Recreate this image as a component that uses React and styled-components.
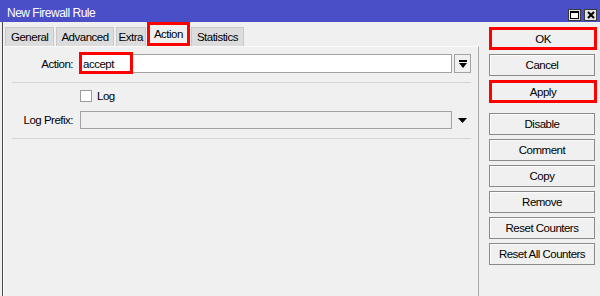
import React from "react";
import styled, { createGlobalStyle } from "styled-components";

const GlobalStyle = createGlobalStyle`
  html, body {
    margin: 0;
    padding: 0;
    background: #f0f0f0;
  }
  body {
    font-family: "Liberation Sans", Arial, sans-serif;
    font-size: 11.5px;
    letter-spacing: -0.5px;
    color: #000;
  }
`;

const Window = styled.div`
  width: 600px;
  height: 296px;
  display: flex;
  flex-direction: column;
  background: #f0f0f0;
  overflow: hidden;
`;

const TitleBar = styled.div`
  height: 22px;
  flex: none;
  box-sizing: border-box;
  background: #4b4fc7;
  color: #fff;
  display: flex;
  align-items: flex-end;
  padding: 0 3px 1px 7px;
`;

const Title = styled.div`
  flex: 1;
  font-size: 12px;
  line-height: 16px;
`;

const TitleButtons = styled.div`
  display: flex;
  gap: 3px;
`;

const TitleButton = styled.div`
  width: 13px;
  height: 12px;
  box-sizing: border-box;
  background: #e4e4e4;
  border: 1px solid #3a3a3a;
  display: flex;
  align-items: center;
  justify-content: center;
`;

const Body = styled.div`
  flex: 1;
  display: flex;
  padding-left: 2px;
`;

const Main = styled.div`
  width: 477px;
  flex: none;
  display: flex;
  flex-direction: column;
  box-sizing: border-box;
  border-left: 1px solid #4a4a4a;
`;

const TabRow = styled.div`
  height: 24px;
  flex: none;
  display: flex;
  align-items: flex-end;
  gap: 2px;
  padding-left: 2px;
`;

const Tab = styled.div`
  height: ${(p) => (p.$active ? 24 : 19)}px;
  box-sizing: border-box;
  padding: 0 ${(p) => p.$pad ?? 5}px;
  display: flex;
  align-items: center;
  background: ${(p) => (p.$active ? "#f0f0f0" : "#dcdcdc")};
  border: ${(p) => (p.$active ? "3px solid #ff0000" : "1px solid #c9c9c9")};
  border-bottom: ${(p) => (p.$active ? "3px solid #ff0000" : "none")};
  margin: 0 ${(p) => (p.$active ? -1 : 0)}px;
`;

const Panel = styled.div`
  flex: 1;
  display: flex;
  flex-direction: column;
  padding: 7px 7px 0 0;
  border-right: 1px solid #a8a8a8;
  border-top: 1px solid #fafafa;
  box-shadow: inset 1px 0 #ffffff;
`;

const FormRow = styled.div`
  display: flex;
  align-items: center;
  height: ${(p) => p.$h}px;
  margin-top: ${(p) => p.$top ?? 0}px;
`;

const Label = styled.div`
  width: 70px;
  margin-right: 7px;
  text-align: right;
`;

const TextBox = styled.div`
  flex: 1;
  height: 100%;
  box-sizing: border-box;
  position: relative;
  display: flex;
  align-items: center;
  padding-left: 2px;
  background: ${(p) => (p.$disabled ? "#f0f0f0" : "#ffffff")};
  border: 1px solid #a3a3a3;
`;

const Mark = styled.div`
  position: absolute;
  left: -2px;
  top: -3px;
  width: 54px;
  height: 22px;
  box-sizing: border-box;
  border: 3px solid #ff0000;
`;

const Trailing = styled.div`
  width: 17px;
  height: 100%;
  margin-left: 2px;
  box-sizing: border-box;
  display: flex;
  align-items: center;
  justify-content: center;
  background: ${(p) => (p.$framed ? "#f0f0f0" : "transparent")};
  border: ${(p) => (p.$framed ? "1px solid #a3a3a3" : "none")};
`;

const Separator = styled.div`
  height: 1px;
  background: #d6d6d6;
  margin: ${(p) => p.$top}px 0 0 9px;
`;

const CheckRow = styled.label`
  display: flex;
  align-items: center;
  height: 13px;
  margin-top: 6px;
  padding-left: 77px;
  gap: 5px;
`;

const CheckBox = styled.span`
  width: 12px;
  height: 12px;
  box-sizing: border-box;
  background: #fff;
  border: 1px solid #9c9c9c;
`;

const Side = styled.div`
  flex: 1;
  display: flex;
  flex-direction: column;
  padding: 5px 0 0 10px;
  gap: 4px;
`;

const Button = styled.div`
  width: ${(p) => (p.$mark ? 108 : 106)}px;
  height: ${(p) => (p.$mark ? 23 : 22)}px;
  box-sizing: border-box;
  display: flex;
  align-items: center;
  justify-content: center;
  background: #f0f0f0;
  border: ${(p) => (p.$mark ? "3px solid #ff0000" : "1px solid #8a8a8a")};
  box-shadow: ${(p) => (p.$mark ? "none" : "inset 1px 1px #fcfcfc")};
  margin-top: ${(p) => p.$top ?? 0}px;
`;

const tabs = [
  { name: "General" },
  { name: "Advanced", pad: 4 },
  { name: "Extra", pad: 2 },
  { name: "Action", active: true, pad: 4 },
  { name: "Statistics" },
];

const buttons = [
  { name: "OK", mark: true },
  { name: "Cancel" },
  { name: "Apply", mark: true },
  { name: "Disable", top: 6 },
  { name: "Comment" },
  { name: "Copy" },
  { name: "Remove" },
  { name: "Reset Counters" },
  { name: "Reset All Counters" },
];

export default function App() {
  return (
    <>
      <GlobalStyle />
      <Window>
        <TitleBar>
          <Title>New Firewall Rule</Title>
          <TitleButtons>
            <TitleButton>
              <svg width="9" height="8" viewBox="0 0 9 8">
                <rect x="0.5" y="0.5" width="8" height="7" fill="#fff" stroke="#000" />
                <rect x="0" y="0" width="9" height="2" fill="#000" />
              </svg>
            </TitleButton>
            <TitleButton>
              <svg width="8" height="8" viewBox="0 0 8 8">
                <path d="M1 1 L7 7 M7 1 L1 7" stroke="#000" strokeWidth="2" />
              </svg>
            </TitleButton>
          </TitleButtons>
        </TitleBar>
        <Body>
          <Main>
            <TabRow>
              {tabs.map((t) => (
                <Tab key={t.name} $active={t.active} $pad={t.pad}>
                  {t.name}
                </Tab>
              ))}
            </TabRow>
            <Panel>
              <FormRow $h={19}>
                <Label>Action:</Label>
                <TextBox>
                  accept
                  <Mark />
                </TextBox>
                <Trailing $framed>
                  <svg width="8" height="8" viewBox="0 0 8 8">
                    <rect x="0" y="0" width="8" height="2" fill="#000" />
                    <polygon points="0,3 8,3 4,8" fill="#000" />
                  </svg>
                </Trailing>
              </FormRow>
              <Separator $top={9} />
              <CheckRow>
                <CheckBox />
                Log
              </CheckRow>
              <FormRow $h={18} $top={9}>
                <Label>Log Prefix:</Label>
                <TextBox $disabled />
                <Trailing>
                  <svg width="9" height="5" viewBox="0 0 9 5">
                    <polygon points="0,0 9,0 4.5,5" fill="#000" />
                  </svg>
                </Trailing>
              </FormRow>
              <Separator $top={9} />
            </Panel>
          </Main>
          <Side>
            {buttons.map((b) => (
              <Button key={b.name} $mark={b.mark} $top={b.top}>
                {b.name}
              </Button>
            ))}
          </Side>
        </Body>
      </Window>
    </>
  );
}
